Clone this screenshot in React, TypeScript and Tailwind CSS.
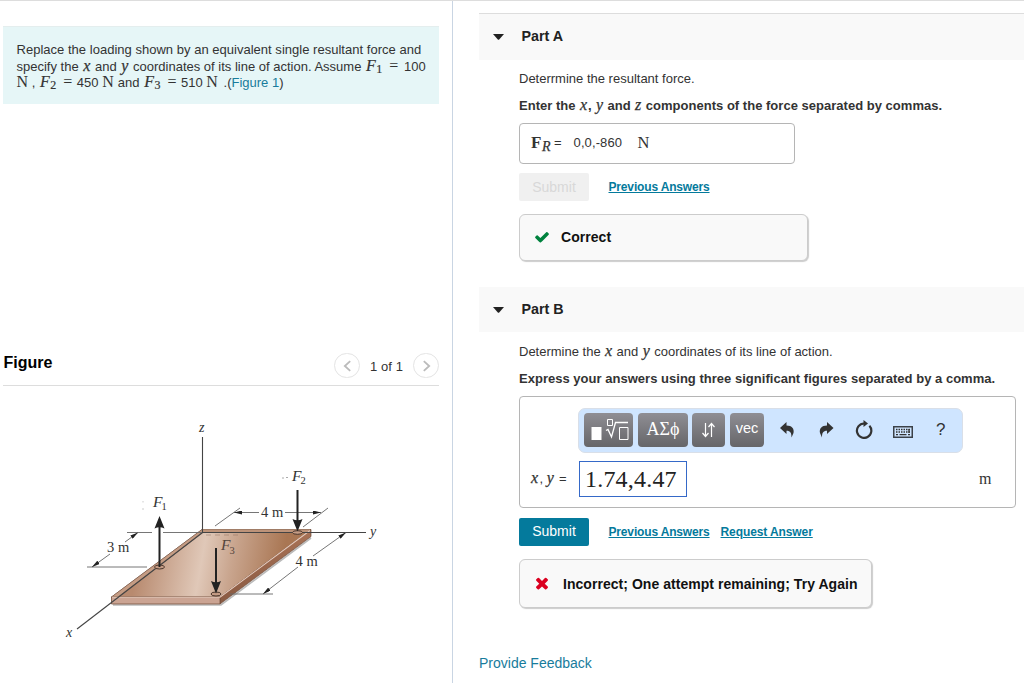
import React, { ReactNode } from 'react';

const CHECK_PATH =
  'M1671 566q0 40-28 68l-724 724-136 136q-28 28-68 28t-68-28l-136-136-362-362q-28-28-28-68t28-68l136-136q28-28 68-28t68 28l294 295 656-657q28-28 68-28t68 28l136 136q28 28 28 68z';
const CROSS_PATH =
  'M1490 1322q0 40-28 68l-136 136q-28 28-68 28t-68-28l-294-294-294 294q-28 28-68 28t-68-28l-136-136q-28-28-28-68t28-68l294-294-294-294q-28-28-28-68t28-68l136-136q28-28 68-28t68 28l294 294 294-294q28-28 68-28t68 28l136 136q28 28 28 68t-28 68l-294 294 294 294q28 28 28 68z';

/* Inline math variable */
function V({ children, className = 'mx-[0.8px]' }: { children: ReactNode; className?: string }) {
  return (
    <i className={`font-['Liberation_Serif',serif] text-[16px] leading-[0] font-normal [-webkit-text-stroke:0.25px_#333] ${className}`}>
      {children}
    </i>
  );
}

/* Force symbol with its index */
function Force({ index }: { index: number }) {
  return (
    <span className="mr-[6px] ml-[1px] font-['Liberation_Serif',serif] leading-[0] [-webkit-text-stroke:0.2px_#333]">
      <i className="text-[16px]">F</i>
      <span className="relative top-[2px] ml-[0.5px] text-[12px]">{index}</span>
    </span>
  );
}

function Eq() {
  return <span className="mx-[1px] font-['Liberation_Serif',serif] text-[16px] leading-[0]">=</span>;
}

function Unit({ children, className = '' }: { children: ReactNode; className?: string }) {
  return <span className={`font-['Liberation_Serif',serif] text-[16px] leading-[0] ${className}`}>{children}</span>;
}

function PartHeader({ title, className = '' }: { title: string; className?: string }) {
  return (
    <div className={`flex items-center bg-[#f9f9f9] pl-[14px] ${className}`}>
      <svg width="11" height="6" viewBox="0 0 11 6">
        <path d="M0 0H11L6.2 5.4Q5.5 6 4.8 5.4Z" fill="#222" />
      </svg>
      <h2 className="mb-[1px] ml-[17.500px] text-[14.3px] leading-5 font-bold text-[#222]">{title}</h2>
    </div>
  );
}

function Link({ children, className = '' }: { children: ReactNode; className?: string }) {
  return (
    <a href="#" className={`text-[12px] font-bold text-[#047a9c] underline underline-offset-1 ${className}`}>
      {children}
    </a>
  );
}

function ToolButton({ children, className = '' }: { children: ReactNode; className?: string }) {
  return (
    <button
      className={`mb-[1px] flex h-[34px] items-center justify-center rounded-[4px] bg-linear-to-b from-[#8f8e94] to-[#666669] text-white ${className}`}
    >
      {children}
    </button>
  );
}

function PlateFigure() {
  return (
    <svg
      width="452"
      height="297"
      viewBox="0 386 452 297"
      className="block font-['Liberation_Serif',serif]"
      fill="#333"
    >
      <defs>
        <linearGradient id="top" gradientUnits="userSpaceOnUse" x1="140" y1="550" x2="280" y2="575">
          <stop offset="0" stopColor="#b88a6f" />
          <stop offset="0.44" stopColor="#e0c8b8" />
          <stop offset="0.65" stopColor="#c9a58e" />
          <stop offset="1" stopColor="#a97653" />
        </linearGradient>
        <linearGradient id="side" x1="0" y1="1" x2="1" y2="0">
          <stop offset="0" stopColor="#8a5a42" />
          <stop offset="1" stopColor="#a87256" />
        </linearGradient>
        <marker id="dim" viewBox="0 0 8 4" refX="8" refY="2" markerWidth="8" markerHeight="4" markerUnits="userSpaceOnUse" orient="auto-start-reverse">
          <path d="M0 0L8 2L0 4Z" fill="#222" />
        </marker>
      </defs>

      {/* plate */}
      <path d="M113 605H221L311 538" fill="none" stroke="#bbb" strokeWidth="1.6" />
      <path d="M111.500 597L202 529.500H311L220 597Z" fill="url(#top)" stroke="#6b4a3a" strokeWidth="0.8" />
      <path d="M111.500 597L202 529.500L203 532.500L118 597Z" fill="#c59c84" stroke="#6b4a3a" strokeWidth="0.4" />
      <path d="M202 529.500H311L307 532.500H203Z" fill="#bd9379" />
      <path d="M220 597L311 529.500V536.500L220 604Z" fill="url(#side)" stroke="#6b4a3a" strokeWidth="0.7" />
      <path d="M111.500 597H220V604H111.500Z" fill="#cba493" stroke="#76503e" strokeWidth="0.8" />
      <path d="M112 597.300H220L310 530.500" fill="none" stroke="#e6cbbd" strokeWidth="1.1" />
      <path d="M206 535H242" stroke="#8d6e5c" strokeWidth="0.5" strokeDasharray="5 4" />

      {/* axes */}
      <g stroke="#444" strokeWidth="1.1" fill="none">
        <path d="M202.500 437V532.500H366" />
        <path d="M202.500 532.500L77 629" />
      </g>

      {/* dimension lines */}
      <g stroke="#666" strokeWidth="0.9" fill="none">
        <path d="M127 532.500H152M163 532.500H202M87 567H147" />
        <path d="M125 542L138 532.500" markerEnd="url(#dim)" />
        <path d="M110 554L92 567" markerEnd="url(#dim)" />
        <path d="M215 526L240 508M303 527L328 508" />
        <path d="M259 512.500H234" markerEnd="url(#dim)" />
        <path d="M285 512.500H321" markerEnd="url(#dim)" />
        <path d="M313 556L346 532.500" markerEnd="url(#dim)" />
        <path d="M298 567L263 594" markerEnd="url(#dim)" />
        <path d="M230 594H273" />
      </g>

      {/* holes and force arrows */}
      <g fill="#c49b84" stroke="#49352b" strokeWidth="1">
        <ellipse cx="159.500" cy="567" rx="5" ry="2" />
        <ellipse cx="297.500" cy="532.500" rx="5" ry="1.800" />
        <ellipse cx="216" cy="594" rx="5" ry="2" />
      </g>
      <g stroke="#222" strokeWidth="2">
        <path d="M159.500 567V525M297.500 490V524M216 548V584" />
      </g>
      <g fill="#222">
        <path d="M159.500 516L164.500 528.500Q159.500 526 154.500 528.500Z" />
        <path d="M297.500 531.500L302.500 519Q297.500 521.500 292.500 519Z" />
        <path d="M216 593.500L221 581Q216 583.500 211 581Z" />
      </g>

      {/* labels */}
      <g fontSize="14">
        <text x="199" y="432" fontStyle="italic">z</text>
        <text x="370" y="536" fontStyle="italic">y</text>
        <text x="66" y="637" fontStyle="italic">x</text>
        <text x="107" y="552" fontSize="14.500">3 m</text>
        <text x="261" y="517" fontSize="14.500">4 m</text>
        <text x="295.500" y="566" fontSize="14.500">4 m</text>
      </g>
      <g fontSize="15.500" fontStyle="italic">
        <text x="153" y="507">F<tspan fontSize="10.500" fontStyle="normal" dy="3" dx="-1">1</tspan></text>
        <text x="292" y="480.500">F<tspan fontSize="10.500" fontStyle="normal" dy="3" dx="-1">2</tspan></text>
        <text x="221" y="550" fill="#54443c">F<tspan fontSize="10.500" fontStyle="normal" dy="3.500" dx="-1">3</tspan></text>
      </g>
      <path d="M282 478H284M286 477.500H288" stroke="#aaa" />
      <path d="M143 501V502.500M143 508V510" stroke="#ccc" />
    </svg>
  );
}

function ProblemPane() {
  return (
    <section className="h-[682px] w-[453px] shrink-0 border-r border-[#c9d5e3]">
      <div className="mt-[25px] ml-[3px] h-[78px] w-[436px] border-t border-[#e4eeee] bg-[#e6f6f7] pt-[15px] pl-[13.500px] text-[13px] leading-[16.5px] whitespace-nowrap text-[#333]">
        <p className="h-[16.5px] tracking-[0.02px]">Replace the loading shown by an equivalent single resultant force and</p>
        <p className="h-[16.5px]">
          specify the <V className="mx-[1px]">x</V> and <V className="mx-[1px]">y</V> coordinates of its line of action. Assume{' '}
          <Force index={1} />
          <Eq /> <span className="ml-[1px]">100</span>
        </p>
        <p className="h-[16.5px]">
          <Unit>N</Unit> , <Force index={2} />
          <Eq /> 450 <Unit className="mr-[0.5px]">N</Unit> and <Force index={3} />
          <Eq /> 510 <Unit className="mr-[2px]">N</Unit> .(<span className="text-[#187c9c]">Figure 1</span>)
        </p>
      </div>

      <div className="mt-[243px] ml-[3px] flex h-[39px] w-[436px] border-b border-[#ddd]">
        <h2 className="mt-[5px] ml-[0.5px] flex-1 text-[16px] leading-[22px] font-bold text-black">Figure</h2>
        <div className="mt-[6px] flex h-[25px] items-center text-[13px] text-[#333]">
          <PagerButton d="M8 1L2 6.500L8 12" />
          <span className="mt-[3px] w-[53px] text-center tracking-[0.1px]">1 of 1</span>
          <PagerButton d="M2 1L8 6.500L2 12" />
        </div>
      </div>
      <PlateFigure />
    </section>
  );
}

function PagerButton({ d }: { d: string }) {
  return (
    <button className="flex h-[25px] w-[26px] items-center justify-center rounded-full border border-[#e4e4e4]">
      <svg width="9" height="12" viewBox="0 0 10 13" fill="none" stroke="#bbb" strokeWidth="2">
        <path d={d} />
      </svg>
    </button>
  );
}

function MathToolbar() {
  return (
    <div className="ml-[58px] flex h-[45px] w-[385px] items-center rounded-[7px] border border-[#d9dfe8] bg-[#cfe5ff] pl-[5px]">
      <ToolButton className="w-[49px]">
        <svg width="40" height="26" viewBox="0 0 40 26" fill="none" stroke="white">
          <path d="M2.500 10H12.500V23H2.500Z" fill="white" stroke="none" />
          <path d="M18.500 2.500H23.500V8.500H18.500Z" />
          <path d="M17 13.500L19 12.500L22.500 20L26.500 5.500H39" strokeWidth="1.3" />
          <path d="M30.500 10.500H39V22.500H30.500Z" />
        </svg>
      </ToolButton>
      <ToolButton className="ml-[5px] w-[50px] pb-[2px] font-['Liberation_Serif',serif] text-[18px]">ΑΣϕ</ToolButton>
      <ToolButton className="ml-[4px] w-[33px]">
        <svg width="15" height="16" viewBox="0 0 15 16" fill="none" stroke="white" strokeWidth="1.2">
          <path d="M4.500 1V14.500M1.500 11L4.500 14.500L7.500 11M10.500 15V1.500M7.500 5L10.500 1.500L13.500 5" />
        </svg>
      </ToolButton>
      <ToolButton className="ml-[5px] w-[34px] pb-[3px] text-[14.5px]">vec</ToolButton>
      <svg width="15" height="16" viewBox="0 0 15 16" fill="#333" className="mb-[2px] ml-[16px]">
        <path d="M0 6L6.500 0V3.500C12 3.500 14.500 7 13.500 11L11.500 15.500C11.500 11 10.500 8.800 6.500 8.800V12Z" />
      </svg>
      <svg width="15" height="16" viewBox="0 0 15 16" fill="#333" className="mb-[2px] ml-[24px]">
        <path d="M14.500 6L8 0V3.500C2.500 3.500 0 7 1 11L3 15.500C3 11 4 8.800 8 8.800V12Z" />
      </svg>
      <svg width="18" height="19" viewBox="0 0 18 19" className="mb-[2px] ml-[21px]">
        <path d="M9 3.500A7.200 7.200 0 1 0 14.400 5.800" fill="none" stroke="#333" strokeWidth="2.200" />
        <path d="M8.500 0L13 3.500L8.500 7Z" fill="#333" />
      </svg>
      <svg width="20" height="12" viewBox="0 0 20 12" className="mt-[2px] ml-[20px]">
        <path d="M0.750 0.750H19.250V11.250H0.750Z" fill="none" stroke="#3b4148" strokeWidth="1.5" />
        <path d="M3 3.500H17M3 6H17" stroke="#333" strokeWidth="1.4" strokeDasharray="1.5 1" />
        <path d="M3 8.700H5M6.500 8.700H13.500M15 8.700H17M16 3V7" stroke="#333" strokeWidth="1.3" />
      </svg>
      <span className="mb-[2px] ml-[23px] text-[17px] leading-none text-[#333]">?</span>
    </div>
  );
}

function AnswerPane() {
  return (
    <main className="min-w-0 flex-1 pt-[12px] pl-[26px] text-[13px] whitespace-nowrap text-[#333]">
      <PartHeader title="Part A" className="h-[47px] border-t border-[#ddd] pb-[1px]" />
      <div className="pl-[40px]">
        <p className="mt-[10px] h-[18px] leading-[18px]">Deterrmine the resultant force.</p>
        <p className="mt-[9px] h-[18px] leading-[18px] font-bold tracking-[0.02px]">
          Enter the <V>x</V>, <V>y</V> and <V>z</V> components of the force separated by commas.
        </p>
        <div className="mt-[8px] flex h-[41px] w-[276px] items-center rounded-[4px] border border-[#b5b5b5] pb-[1px] pl-[11px]">
          <b className="font-['Liberation_Serif',serif] text-[17px]">F</b>
          <i className="relative top-[3px] ml-[0.5px] font-['Liberation_Serif',serif] text-[14px] [-webkit-text-stroke:0.25px_#333]">R</i>
          <span className="ml-[3.500px]">=</span>
          <span className="ml-[12px] tracking-[0.1px]">0,0,-860</span>
          <span className="ml-[15.5px] font-['Liberation_Serif',serif] text-[16.5px]">N</span>
        </div>
        <div className="mt-[9px] flex h-[28px] items-center">
          <button className="h-[28px] w-[70px] rounded-[2px] bg-[#f0f0f0] text-[14px] text-[#d8d8d8]">Submit</button>
          <Link className="ml-[19.500px] tracking-[-0.16px]">Previous Answers</Link>
        </div>
        <div className="mt-[13px] flex h-[47px] w-[289px] items-center rounded-[6px] border border-[#ccc] bg-[#f9f9f9] pl-[14px] text-[14px] font-bold text-[#111] shadow-[1px_1px_1px_#ccc]">
          <svg width="16" height="16" viewBox="0 0 1792 1792" fill="#00823e" className="mb-[1px]">
            <path d={CHECK_PATH} />
          </svg>
          <span className="ml-[11px] tracking-[0.05px]">Correct</span>
        </div>
      </div>

      <PartHeader title="Part B" className="mt-[26px] h-[45px]" />
      <div className="pl-[40px]">
        <p className="mt-[11px] h-[18px] leading-[18px]">
          Determine the <V>x</V> and <V>y</V> coordinates of its line of action.
        </p>
        <p className="mt-[9px] h-[18px] leading-[18px] font-bold tracking-[0.02px]">
          Express your answers using three significant figures separated by a comma.
        </p>
        <div className="mt-[8px] h-[112px] w-[497px] rounded-[4px] border border-[#b5b5b5] pt-[11px]">
          <MathToolbar />
          <div className="mt-[8px] flex h-[36px] items-center pl-[11px]">
            <span className="w-[48px]">
              <V className="mr-[1.5px]">x</V>, <V className="mr-[1.5px]">y</V> =
            </span>
            <span className="flex h-[36px] w-[108px] items-center border border-[#3569c8] pb-[1px] pl-[5px] font-['Liberation_Serif',serif] text-[24px] tracking-[0.2px] text-[#222]">
              1.74,4.47
            </span>
            <span className="ml-[292px] font-['Liberation_Serif',serif] text-[16px]">m</span>
          </div>
        </div>
        <div className="mt-[10px] flex h-[28px] items-center">
          <button className="h-[28px] w-[70px] rounded-[2px] bg-[#047a9c] pb-[1px] text-[14px] text-white">Submit</button>
          <Link className="ml-[19.500px] tracking-[-0.16px]">Previous Answers</Link>
          <Link className="ml-[11px] tracking-[-0.1px]">Request Answer</Link>
        </div>
        <div className="mt-[13px] flex h-[49px] w-[353px] items-center rounded-[6px] border border-[#ccc] bg-[#f9f9f9] pl-[13px] text-[14px] font-bold text-[#111] shadow-[1px_1px_1px_#ccc]">
          <svg width="18" height="18" viewBox="0 0 1792 1792" fill="#db0020" className="mb-[1px]">
            <path d={CROSS_PATH} />
          </svg>
          <span className="mt-[1px] ml-[12px] tracking-[0.04px]">Incorrect; One attempt remaining; Try Again</span>
        </div>
      </div>
      <a href="#" className="mt-[45px] block text-[14px] leading-[20px] text-[#187c9c]">
        Provide Feedback
      </a>
    </main>
  );
}

export default function App() {
  return (
    <div className="flex h-[683px] w-[1024px] overflow-hidden border-t border-[#ddd] bg-white font-['Liberation_Sans',Arial,sans-serif]">
      <ProblemPane />
      <AnswerPane />
    </div>
  );
}
